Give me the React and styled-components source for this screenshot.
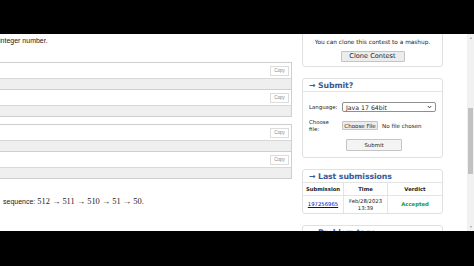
import styled, { createGlobalStyle } from 'styled-components';

const GlobalStyle = createGlobalStyle`
  html, body {
    margin: 0;
    padding: 0;
    background: #000;
  }
  body {
    width: 474px;
    height: 266px;
    overflow: hidden;
    font-family: "DejaVu Sans", Verdana, sans-serif;
  }
`;

// ─── FRAME ───
const Frame = styled.div`
  display: flex;
  flex-direction: column;
  width: 474px;
  height: 266px;
`;

const BlackBar = styled.div`
  height: ${props => props.$h}px;
  background: #000;
  flex-shrink: 0;
`;

const Stage = styled.div`
  height: 197px;
  background: #fff;
  display: flex;
  overflow: hidden;
  flex-shrink: 0;
`;

// ─── PROBLEM COLUMN ───
const MainCol = styled.div`
  width: 298px;
  margin-left: -6px;
  flex-shrink: 0;
  font-family: "Liberation Sans", Arial, sans-serif;
  color: #222;
`;

const Statement = styled.p`
  margin: 0;
  padding: 2px 0 0 5px;
  font-size: 7px;
  line-height: 9px;
`;

const Samples = styled.div`
  margin-top: 17px;
  display: flex;
  flex-direction: column;
  gap: 7px;
`;

const SampleTest = styled.div`
  display: flex;
  flex-direction: column;
`;

const Block = styled.div`
  border: 1px solid #cfcfcf;
  border-top: ${props => props.$first ? '1px solid #cfcfcf' : 'none'};
`;

const TitleRow = styled.div`
  height: 15px;
  background: #fff;
  border-bottom: 1px solid #d8d8d8;
  display: flex;
  align-items: center;
  justify-content: flex-end;
  padding-right: 2px;
`;

const CopyButton = styled.span`
  width: 19px;
  height: 10px;
  box-sizing: border-box;
  border: 1px solid #dcdcdc;
  background: #fff;
  color: #8a8a8a;
  font-size: 4.6px;
  display: flex;
  align-items: center;
  justify-content: center;
`;

const PreRow = styled.div`
  height: 10px;
  background: #efefef;
`;

const Note = styled.p`
  margin: 18px 0 0 9px;
  font-size: 7px;
  line-height: 10px;
  white-space: nowrap;
`;

const Math = styled.span`
  font-family: "Liberation Serif", "Times New Roman", serif;
  font-size: 8.4px;
`;

// ─── SIDEBAR ───
const Sidebar = styled.div`
  width: 141px;
  margin-left: 10px;
  margin-top: -6px;
  flex-shrink: 0;
  display: flex;
  flex-direction: column;
  gap: 11px;
`;

const RoundBox = styled.div`
  border: 1px solid #e0e0e0;
  border-radius: 3px;
  background: #fff;
  flex-shrink: 0;
`;

const Caption = styled.div`
  height: 12px;
  border-bottom: 1px solid #e4e4e4;
  padding-left: 6px;
  display: flex;
  align-items: center;
  color: #3b5998;
  font-weight: bold;
  font-size: 7.8px;
  letter-spacing: -0.1px;
  white-space: nowrap;
`;

const CloneBody = styled.div`
  padding: 10px 0 4px;
  display: flex;
  flex-direction: column;
  align-items: center;
  gap: 5px;
  font-size: 5.8px;
  line-height: 7px;
  color: #222;
`;

const GrayButton = styled.span`
  width: ${props => props.$w}px;
  height: ${props => props.$h}px;
  box-sizing: border-box;
  border: 1px solid #c4c4c4;
  border-radius: 1px;
  background: ${props => props.$light ? '#f4f4f4' : '#ececec'};
  color: #222;
  font-size: ${props => props.$fs}px;
  display: flex;
  align-items: center;
  justify-content: center;
`;

const Form = styled.div`
  padding: 10px 6px 6px 6px;
  display: grid;
  grid-template-columns: 33px 1fr;
  row-gap: 7px;
  font-size: 5.4px;
  color: #222;
  align-items: center;
`;

const Label = styled.span`
  line-height: 6.5px;
`;

const Select = styled.div`
  height: 10px;
  box-sizing: border-box;
  border: 1px solid #8f8f8f;
  border-radius: 2px;
  display: flex;
  align-items: center;
  justify-content: space-between;
  padding: 0 3px 0 3px;
  font-size: 6.2px;
`;

const FileRow = styled.div`
  display: flex;
  align-items: center;
  gap: 4px;
  white-space: nowrap;
  font-size: 5.6px;
`;

const SubmitRow = styled.div`
  grid-column: 1 / 3;
  display: flex;
  padding-left: 37px;
`;

const Table = styled.table`
  width: 100%;
  border-collapse: collapse;
  font-size: 5.3px;
  color: #222;
`;

const Th = styled.th`
  height: 12px;
  padding: 0;
  border: 1px solid #e4e4e4;
  border-left: ${props => props.$first ? 'none' : '1px solid #e4e4e4'};
  border-right: ${props => props.$last ? 'none' : '1px solid #e4e4e4'};
  border-top: none;
  font-weight: bold;
  width: ${props => props.$w}px;
`;

const Td = styled.td`
  height: 17px;
  padding: 0;
  border: 1px solid #e4e4e4;
  border-left: ${props => props.$first ? 'none' : '1px solid #e4e4e4'};
  border-right: ${props => props.$last ? 'none' : '1px solid #e4e4e4'};
  border-bottom: none;
  text-align: center;
  line-height: 7px;
`;

const SubLink = styled.a`
  color: #0000cc;
  text-decoration: underline;
`;

const Verdict = styled.span`
  color: #1a9a1a;
  font-weight: bold;
`;

// ─── SCROLLBAR ───
const Scrollbar = styled.div`
  margin-left: auto;
  width: 7px;
  background: #f1f1f1;
  display: flex;
  flex-direction: column;
  align-items: center;
  flex-shrink: 0;
`;

const Thumb = styled.div`
  width: 5px;
  height: 66px;
  margin-top: 69px;
  background: #c1c1c1;
`;

const Arrow = styled.div`
  width: 0;
  height: 0;
  border-left: 1.5px solid transparent;
  border-right: 1.5px solid transparent;
  margin-top: ${props => props.$mt}px;
  ${props => props.$up
    ? 'border-bottom: 2px solid #a3a3a3;'
    : 'border-top: 2px solid #a3a3a3;'}
`;

function Chevron() {
  return (
    <svg width="5" height="4" viewBox="0 0 10 8">
      <path d="M1.5 2 L5 5.5 L8.5 2" fill="none" stroke="#222" strokeWidth="1.8" />
    </svg>
  );
}

function Sample() {
  return (
    <SampleTest>
      <Block $first>
        <TitleRow><CopyButton>Copy</CopyButton></TitleRow>
        <PreRow />
      </Block>
      <Block>
        <TitleRow><CopyButton>Copy</CopyButton></TitleRow>
        <PreRow />
      </Block>
    </SampleTest>
  );
}

export default function App() {
  return (
    <Frame>
      <GlobalStyle />
      <BlackBar $h={34} />
      <Stage>
        <MainCol>
          <Statement>integer number.</Statement>
          <Samples>
            <Sample />
            <Sample />
          </Samples>
          <Note>
            sequence: <Math>512 → 511 → 510 → 51 → 50.</Math>
          </Note>
        </MainCol>

        <Sidebar>
          <RoundBox>
            <CloneBody>
              <span>You can clone this contest to a mashup.</span>
              <GrayButton $w={64} $h={11} $fs={6.6}>Clone Contest</GrayButton>
            </CloneBody>
          </RoundBox>

          <RoundBox>
            <Caption>→ Submit?</Caption>
            <Form>
              <Label>Language:</Label>
              <Select>
                <span>Java 17 64bit</span>
                <Chevron />
              </Select>
              <Label>Choose<br />file:</Label>
              <FileRow>
                <GrayButton $w={36} $h={9} $fs={5.5}>Choose File</GrayButton>
                <span>No file chosen</span>
              </FileRow>
              <SubmitRow>
                <GrayButton $w={56} $h={12} $fs={5.4} $light>Submit</GrayButton>
              </SubmitRow>
            </Form>
          </RoundBox>

          <RoundBox>
            <Caption>→ Last submissions</Caption>
            <Table>
              <thead>
                <tr>
                  <Th $first $w={40}>Submission</Th>
                  <Th $w={43}>Time</Th>
                  <Th $last>Verdict</Th>
                </tr>
              </thead>
              <tbody>
                <tr>
                  <Td $first><SubLink>197256965</SubLink></Td>
                  <Td>Feb/28/2023<br />13:39</Td>
                  <Td $last><Verdict>Accepted</Verdict></Td>
                </tr>
              </tbody>
            </Table>
          </RoundBox>

          <RoundBox>
            <Caption>→ Problem tags</Caption>
          </RoundBox>
        </Sidebar>

        <Scrollbar>
          <Arrow $up $mt={3} />
          <Thumb />
          <Arrow $mt={52} />
        </Scrollbar>
      </Stage>
      <BlackBar $h={35} />
    </Frame>
  );
}
